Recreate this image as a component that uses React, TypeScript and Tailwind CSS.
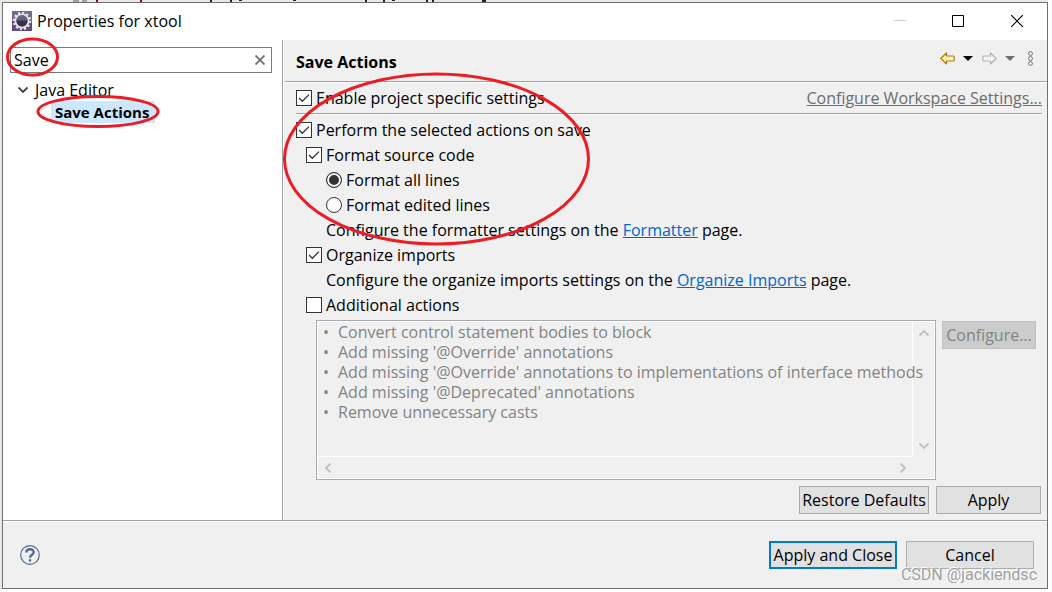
import type { ReactNode } from "react";

const ACTIONS = [
  "Convert control statement bodies to block",
  "Add missing '@Override' annotations",
  "Add missing '@Override' annotations to implementations of interface methods",
  "Add missing '@Deprecated' annotations",
  "Remove unnecessary casts",
];

function Check({ label, checked, className = "" }: { label: string; checked?: boolean; className?: string }) {
  return (
    <label className={`flex h-[25px] items-center gap-1 ${className}`}>
      <span className="grid size-4 shrink-0">
        <input
          type="checkbox"
          defaultChecked={checked}
          className="peer col-start-1 row-start-1 size-4 appearance-none border border-[#333] bg-white"
        />
        <svg
          viewBox="0 0 16 16"
          className="pointer-events-none invisible col-start-1 row-start-1 size-4 peer-checked:visible"
          fill="none"
          stroke="#333"
          strokeWidth="1.3"
        >
          <path d="M3 8l3.3 3.3L13 4.6" />
        </svg>
      </span>
      {label}
    </label>
  );
}

function Radio({ label, checked }: { label: string; checked?: boolean }) {
  return (
    <label className="flex h-[25px] items-center gap-1 pl-[30px]">
      <input
        type="radio"
        name="format"
        defaultChecked={checked}
        className="size-4 shrink-0 appearance-none rounded-full border border-[#333] bg-white checked:bg-[#333] checked:shadow-[inset_0_0_0_2px_#fff]"
      />
      {label}
    </label>
  );
}

function Hint({ children }: { children: ReactNode }) {
  return <p className="h-[25px] pl-[30px] pt-px leading-6">{children}</p>;
}

function Button({ children, className = "" }: { children: ReactNode; className?: string }) {
  return (
    <button type="button" className={`h-7 whitespace-nowrap bg-[#e1e1e1] ${className}`}>
      {children}
    </button>
  );
}

function Chevron({ d, className = "" }: { d: string; className?: string }) {
  return (
    <svg viewBox="0 0 10 10" className={`size-[10px] ${className}`} fill="none" stroke="currentColor" strokeWidth="1.8">
      <path d={d} />
    </svg>
  );
}

function AppIcon() {
  return (
    <svg viewBox="0 0 20 20" className="size-5">
      <rect width="20" height="20" fill="#75698c" />
      <rect y="10" width="20" height="10" fill="#5d4a7e" />
      <circle cx="10" cy="10" r="8.2" fill="none" stroke="#efedf0" strokeWidth="2" strokeDasharray="2.15 2.14" />
      <circle cx="10" cy="10" r="6.6" fill="#3a3150" stroke="#e9e7ea" strokeWidth="1.8" />
      <path d="M4.6 9.5a5.4 5.4 0 0 1 10.8 0z" fill="#666474" />
    </svg>
  );
}

function TitleBar() {
  return (
    <header className="flex h-[37px] items-center bg-white pb-px pl-[9px]">
      <AppIcon />
      <h1 className="ml-[5px] flex-1">Properties for xtool</h1>
      <button type="button" aria-label="Minimize" className="px-[23px] text-[#ccc]">
        <svg viewBox="0 0 12 12" className="size-3" stroke="currentColor">
          <path d="M0 5.5h12" />
        </svg>
      </button>
      <button type="button" aria-label="Maximize" className="px-[23px]">
        <svg viewBox="0 0 12 12" className="size-3" fill="none" stroke="#000">
          <path d="M.5.5h11v11H.5z" />
        </svg>
      </button>
      <button type="button" aria-label="Close" className="px-[24px]">
        <svg viewBox="0 0 12 12" className="size-3" stroke="#000" strokeWidth="1.2">
          <path d="M0 0l12 12M12 0L0 12" />
        </svg>
      </button>
    </header>
  );
}

function Sidebar() {
  return (
    <nav className="w-[280px] shrink-0 border-r border-[#a0a0a0] bg-white pt-[7px]">
      <div className="ml-[7px] mr-[10px] flex h-[26px] items-center border border-[#7a7a7a]">
        <input
          aria-label="Filter"
          defaultValue="Save"
          className="min-w-0 flex-1 bg-transparent pl-[3px] outline-none"
        />
        <button type="button" aria-label="Clear" className="px-[6px] text-[#6e6e6e]">
          <Chevron d="M0.5 0.5l9 9M9.5 0.5l-9 9" />
        </button>
      </div>
      <ul className="pt-[6px]">
        <li>
          <div className="flex h-[22px] items-center">
            <Chevron d="M0.5 2.5L5 7l4.5-4.5" className="ml-[15px] mr-[7px] text-[#404040]" />
            Java Editor
          </div>
          <ul>
            <li className="ml-[48px] h-[22px] w-[104px] whitespace-nowrap bg-[#cce8ff] pl-1 text-[15px] font-bold leading-[22px]">
              Save Actions
            </li>
          </ul>
        </li>
      </ul>
    </nav>
  );
}

function HistoryBar() {
  return (
    <div className="flex items-center pb-[6px]">
      <button type="button" aria-label="Back">
        <svg viewBox="0 0 15 13" className="h-[13px] w-[15px]" fill="#fff3b8" stroke="#b8770b" strokeWidth="1.2" strokeLinejoin="round">
          <path d="M.8 6.5L6.5 1v3h6.7q1 0 1 1v3q0 1-1 1H6.5v3z" />
        </svg>
      </button>
      <button type="button" aria-label="Back history" className="ml-[8px]">
        <svg viewBox="0 0 10 5" className="h-[5px] w-[10px]">
          <path d="M0 0h10L5 5z" />
        </svg>
      </button>
      <button type="button" aria-label="Forward" className="ml-[9px]">
        <svg viewBox="0 0 15 13" className="h-[13px] w-[15px]" fill="#f4f4f4" stroke="#b4b4b4" strokeWidth="1.2" strokeLinejoin="round">
          <path d="M14.2 6.5L8.5 1v3H1.8q-1 0-1 1v3q0 1 1 1h6.7v3z" />
        </svg>
      </button>
      <button type="button" aria-label="Forward history" className="ml-[8px]">
        <svg viewBox="0 0 10 5" className="h-[5px] w-[10px]">
          <path d="M0 0h10L5 5z" fill="#6e6e6e" />
        </svg>
      </button>
      <button type="button" aria-label="View menu" className="ml-[13px]">
        <svg viewBox="0 0 5 15" className="h-[15px] w-[5px]" fill="#fff" stroke="#6a6a6a">
          <circle cx="2.5" cy="2.5" r="1.9" />
          <circle cx="2.5" cy="7.5" r="1.9" />
          <circle cx="2.5" cy="12.5" r="1.9" />
        </svg>
      </button>
    </div>
  );
}

function ActionList() {
  return (
    <div className="h-[160px] min-w-0 flex-1 border border-[#a9a9b0] text-[#838383]">
      <div className="grid h-full grid-cols-[1fr_21px] grid-rows-[1fr_21px] border border-white">
        <ul className="min-w-0 whitespace-nowrap border-b border-r border-white pl-[5px]">
          {ACTIONS.map((a) => (
            <li key={a} className="flex h-5 items-center">
              <span className="w-[15px] shrink-0">•</span>
              {a}
            </li>
          ))}
        </ul>
        <div className="flex flex-col items-center justify-between py-[6px] text-[#bfbfbf]">
          <Chevron d="M.5 7.5L5 3l4.5 4.5" />
          <Chevron d="M.5 2.5L5 7l4.5-4.5" />
        </div>
        <div className="flex items-center justify-between px-[5px] text-[#bfbfbf]">
          <Chevron d="M7.5.5L3 5l4.5 4.5" />
          <Chevron d="M2.5.5L7 5 2.5 9.5" />
        </div>
      </div>
    </div>
  );
}

function SettingsPage() {
  return (
    <main className="flex min-w-0 flex-1 flex-col border-l border-white pl-px">
      <div className="flex h-[42px] items-center justify-between border-b border-[#a0a0a0] pl-[11px] pr-[14px] pt-[2px]">
        <h2 className="font-bold">Save Actions</h2>
        <HistoryBar />
      </div>
      <div className="flex flex-1 flex-col border-t border-white pl-[11px] pr-[5px]">
        <div className="flex h-[31px] items-center justify-between border-b border-[#a0a0a0]">
          <Check label="Enable project specific settings" checked />
          <a href="#workspace" className="text-[#6d6d6d] underline">
            Configure Workspace Settings...
          </a>
        </div>
        <div className="border-t border-white pt-[2px]">
          <Check label="Perform the selected actions on save" checked />
        </div>
        <Check label="Format source code" checked className="pl-[10px]" />
        <Radio label="Format all lines" checked />
        <Radio label="Format edited lines" />
        <Hint>
          Configure the formatter settings on the{" "}
          <a href="#formatter" className="text-[#0066cc] underline">
            Formatter
          </a>{" "}
          page.
        </Hint>
        <Check label="Organize imports" checked className="pl-[10px]" />
        <Hint>
          Configure the organize imports settings on the{" "}
          <a href="#imports" className="text-[#0066cc] underline">
            Organize Imports
          </a>{" "}
          page.
        </Hint>
        <Check label="Additional actions" className="pl-[10px]" />
        <div className="flex items-start gap-[6px] pl-5 pr-[6px] pt-[3px]">
          <ActionList />
          <button
            type="button"
            disabled
            className="mt-px h-7 w-[94px] border border-[#bfbfbf] bg-[#ccc] text-[#838383]"
          >
            Configure...
          </button>
        </div>
        <div className="flex justify-end gap-[7px] pb-[6px] pr-px pt-[6px]">
          <Button className="w-[130px] border border-[#adadad]">Restore Defaults</Button>
          <Button className="w-[105px] border border-[#adadad]">Apply</Button>
        </div>
      </div>
    </main>
  );
}

// hand-drawn red rings over the dialog
function Rings() {
  return (
    <svg
      viewBox="0 0 600 260"
      className="pointer-events-none absolute left-0 top-0 h-[260px] w-[600px]"
      fill="none"
      stroke="#ed1c24"
      strokeWidth="3"
    >
      <ellipse cx="32.5" cy="57" rx="25" ry="18" />
      <ellipse cx="98" cy="111.5" rx="60" ry="15" />
      <ellipse cx="436.5" cy="159" rx="152" ry="85" />
    </svg>
  );
}

// sliver of the editor that shows above the dialog
function EditorEdge() {
  return (
    <svg viewBox="0 0 520 2" className="block h-[2px] w-[520px]">
      <path d="M71 0h6v2h-6zM80 0h5v2h-5z" fill="#9aa4ae" />
      <path d="M94 0h2v2h-2zM138 0h2v2h-2z" fill="#7f0055" />
      <path d="M208 0h2v2h-2zM228 0h2v2h-2zM237 0h3v1h-3zM291 0h3v1h-3zM363 0h2v2h-2zM381 0h2v2h-2zM390 0h3v1h-3zM424 0h2v2h-2zM430 0h2v2h-2zM480 0h4v2h-4z" fill="#222" />
    </svg>
  );
}

export default function App() {
  return (
    <div className="relative flex min-h-screen flex-col bg-white pb-[3px] pr-[4px] font-['Open_Sans','Noto_Sans',sans-serif] text-[16px] leading-[22px] text-black">
      <div className="flex flex-1 flex-col bg-[#e8e8e8] pl-[2px]">
        <EditorEdge />
        <div className="flex flex-1 flex-col border border-[#707070] bg-[#f0f0f0]">
          <TitleBar />
          <div className="flex flex-1">
            <Sidebar />
            <SettingsPage />
          </div>
          <footer className="relative flex h-[68px] items-center border-t border-[#a0a0a0] pl-[17px] pr-[13px] pt-px shadow-[inset_0_1px_#fff]">
            <button type="button" aria-label="Help">
              <svg viewBox="0 0 20 20" className="size-5" fill="none" stroke="#566a8f">
                <circle cx="10" cy="10" r="9.3" strokeWidth="1.2" />
                <path d="M6.3 7.5C6.3 3.2 13.7 3.2 13.7 7.3C13.7 9.9 10 9.6 10 12.7M10 14.3v2.2" strokeWidth="2.3" />
              </svg>
            </button>
            <div className="ml-auto flex gap-[9px]">
              <Button className="w-32 border-2 border-[#0078d7]">Apply and Close</Button>
              <Button className="w-32 border border-[#adadad]">Cancel</Button>
            </div>
            <span className="absolute bottom-[2px] right-[10px] font-['Roboto',sans-serif] text-[#a0a0a0] [text-shadow:-1px_-1px_#fff]">
              CSDN @jackiendsc
            </span>
          </footer>
        </div>
      </div>
      <Rings />
    </div>
  );
}
